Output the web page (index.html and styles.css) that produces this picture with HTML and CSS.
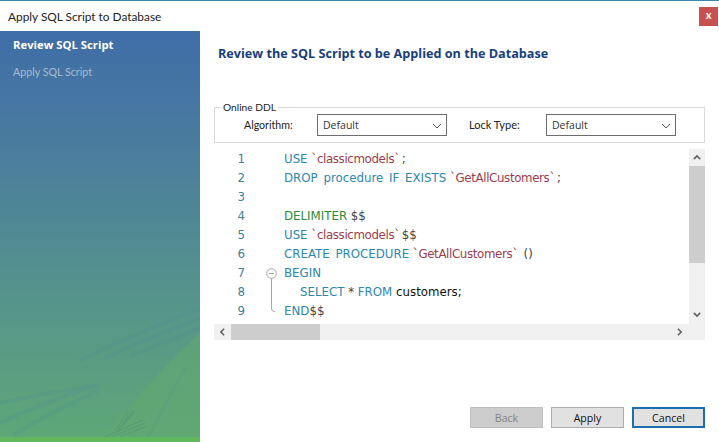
FILE: index.html
```html
<!DOCTYPE html>
<html lang="en">
<head>
<meta charset="utf-8">
<title>Apply SQL Script to Database</title>
<link rel="stylesheet" href="styles.css">
</head>
<body>
<div class="window">
  <header class="titlebar">
    <span class="title">Apply SQL Script to Database</span>
    <span class="close">x</span>
  </header>
  <div class="content">
    <aside class="sidebar">
      <svg class="art" viewBox="0 0 200 162" preserveAspectRatio="none" aria-hidden="true">
        <path d="M103 157 Q150 100 200 53 V157 Z" fill="#62a96f" opacity=".55"/>
        <g fill="none" stroke="#4f8f93" stroke-width="4" opacity=".25">
          <path d="M80 80 Q140 52 200 28"/>
          <path d="M105 78 Q155 55 200 38"/>
          <path d="M130 76 Q170 60 200 48"/>
          <path d="M0 123 Q50 112 100 105"/>
          <path d="M0 143 Q45 122 90 107"/>
          <path d="M13 155 Q55 130 100 110"/>
        </g>
        <path d="M148 157 L185 88" stroke="#5a9c80" stroke-width="3" fill="none" opacity=".4"/>
        <g stroke="#4f9478" stroke-width="1" fill="none" opacity=".6">
          <path d="M116 150 L128 130"/><path d="M119 150 L131 130"/><path d="M122 147 L134 130"/><path d="M125 143 L135 131"/>
          <path d="M105 157 L143 140"/><path d="M112 157 L145 143"/><path d="M120 157 L147 146"/>
        </g>
        <rect x="0" y="157" width="200" height="5" fill="#62b85f"/>
      </svg>
      <div class="step step-active">Review SQL Script</div>
      <div class="step">Apply SQL Script</div>
    </aside>
    <main class="main">
      <h1 class="heading">Review the SQL Script to be Applied on the Database</h1>
      <fieldset class="ddl">
        <legend class="ddl-legend">Online DDL</legend>
        <span class="label label-algo">Algorithm:</span>
        <div class="select select-algo">
          <span>Default</span>
          <svg class="chevron" viewBox="0 0 10 6" aria-hidden="true"><path d="M1 1 L5 5 L9 1"/></svg>
        </div>
        <span class="label label-lock">Lock Type:</span>
        <div class="select">
          <span>Default</span>
          <svg class="chevron" viewBox="0 0 10 6" aria-hidden="true"><path d="M1 1 L5 5 L9 1"/></svg>
        </div>
      </fieldset>
      <section class="editor">
        <div class="editor-top">
          <div class="code">
            <div class="row"><span class="num">1</span><span class="fold"></span><span class="src"><b class="kw">USE</b> <b class="str">`classicmodels`</b><b class="op">;</b></span></div>
            <div class="row"><span class="num">2</span><span class="fold"></span><span class="src"><b class="kw">DROP procedure IF EXISTS</b> <b class="str">`GetAllCustomers`</b><b class="op">;</b></span></div>
            <div class="row"><span class="num">3</span><span class="fold"></span><span class="src"></span></div>
            <div class="row"><span class="num">4</span><span class="fold"></span><span class="src"><b class="delim">DELIMITER</b> <b class="op">$$</b></span></div>
            <div class="row"><span class="num">5</span><span class="fold"></span><span class="src"><b class="kw">USE</b> <b class="str">`classicmodels`</b><b class="op">$$</b></span></div>
            <div class="row"><span class="num">6</span><span class="fold"></span><span class="src"><b class="kw">CREATE PROCEDURE</b> <b class="str">`GetAllCustomers`</b> <b class="op">()</b></span></div>
            <div class="row"><span class="num">7</span><span class="fold"><svg viewBox="0 0 12 19" aria-hidden="true"><circle cx="5.5" cy="9.5" r="4.8"/><path d="M3 9.5 H8 M5.5 14.5 V19"/></svg></span><span class="src"><b class="kw">BEGIN</b></span></div>
            <div class="row"><span class="num">8</span><span class="fold"><svg viewBox="0 0 12 19" aria-hidden="true"><path d="M5.5 0 V19"/></svg></span><span class="src src-indent"><b class="kw">SELECT</b> <b class="op">*</b> <b class="kw">FROM</b> <b class="id">customers;</b></span></div>
            <div class="row"><span class="num">9</span><span class="fold"><svg viewBox="0 0 12 19" aria-hidden="true"><path d="M5.5 0 V7 Q5.5 9.5 9 9.5"/></svg></span><span class="src"><b class="kw">END</b><b class="op">$$</b></span></div>
          </div>
          <div class="vscroll">
            <svg class="arrow" viewBox="0 0 10 6" aria-hidden="true"><path d="M1 5 L5 1 L9 5"/></svg>
            <div class="vthumb"></div>
            <svg class="arrow arrow-down" viewBox="0 0 10 6" aria-hidden="true"><path d="M1 1 L5 5 L9 1"/></svg>
          </div>
        </div>
        <div class="hscroll">
          <svg class="arrow-h" viewBox="0 0 6 10" aria-hidden="true"><path d="M5 1 L1 5 L5 9"/></svg>
          <div class="hthumb"></div>
          <svg class="arrow-h arrow-right" viewBox="0 0 6 10" aria-hidden="true"><path d="M1 1 L5 5 L1 9"/></svg>
        </div>
      </section>
      <footer class="buttons">
        <button class="btn btn-disabled" type="button" disabled>Back</button>
        <button class="btn" type="button">Apply</button>
        <button class="btn btn-default" type="button">Cancel</button>
      </footer>
    </main>
  </div>
</div>
</body>
</html>
```
FILE: styles.css
```css
* { box-sizing: border-box; }
html, body { margin: 0; height: 100%; }
body { background: #fff; font-family: "Lato", "Liberation Sans", sans-serif; font-size: 12px; color: #1a1a1a; overflow: hidden; }
.window { width: 719px; height: 442px; display: flex; flex-direction: column; border-top: 1px solid #3f87a6; }
.titlebar { height: 30px; flex: none; display: flex; align-items: center; justify-content: space-between; padding: 0 1px 0 8px; }
.title { font-size: 11.85px; color: #222; }
.close { width: 19px; height: 19px; background: #c75050; color: #fff; font-size: 11px; font-weight: 700; line-height: 16px; text-align: center; }
.content { flex: 1; display: flex; min-height: 0; }
.sidebar { width: 200px; flex: none; position: relative; background: linear-gradient(180deg, #3f6da8 0%, #4b7d9d 30%, #55928d 62%, #5da877 100%); padding: 6px 0 0 13px; }
.art { position: absolute; left: 0; bottom: 0; width: 200px; height: 162px; }
.step { position: relative; height: 27px; line-height: 15px; color: #a9bdd0; font-size: 10.7px; }
.step-active { color: #fff; font-weight: 700; font-family: "Open Sans", sans-serif; font-size: 11.3px; }
.main { flex: 1; min-width: 0; display: flex; flex-direction: column; padding: 0 14px 14px 14px; }
.heading { margin: 14px 0 0 4px; height: 17px; font-family: "Open Sans", sans-serif; font-size: 12.65px; line-height: 17px; font-weight: 700; color: #17407c; }
.ddl { margin: 39px 0 0; padding: 1px 28px 0 29px; height: 42px; border: 1px solid #d9d9d9; display: flex; align-items: flex-start; }
.ddl-legend { padding: 0 2px; margin-left: -23px; font-size: 10.2px; line-height: 12px; color: #222; }
.label { font-size: 11px; line-height: 22px; color: #222; }
.label-algo { width: 73px; font-size: 10.6px; }
.label-lock { width: 77px; margin-left: 22px; }
.select { width: 130px; height: 22px; border: 1px solid #6d6d6d; background: #fff; display: flex; align-items: center; justify-content: space-between; padding: 0 4px 0 5px; font-family: "Open Sans", sans-serif; font-size: 10.5px; color: #333; }
.chevron { width: 10px; height: 6px; margin-top: 1px; fill: none; stroke: #555; stroke-width: 1; }
.editor { margin-top: 6px; height: 191px; display: flex; flex-direction: column; background: #fff; }
.editor-top { flex: 1; display: flex; min-height: 0; }
.code { flex: 1; padding-top: 1px; font-family: "DejaVu Sans", sans-serif; font-size: 11.8px; }
.row { height: 19px; line-height: 19px; display: flex; }
.num { width: 31px; text-align: right; color: #3a8294; flex: none; }
.fold { width: 12px; height: 19px; margin-left: 21px; flex: none; }
.fold svg { display: block; width: 12px; height: 19px; fill: none; stroke: #a5a5a5; stroke-width: 1; }
.src { margin-left: 6px; white-space: nowrap; }
.src-indent { padding-left: 16px; }
.src b { font-weight: 400; }
.kw { color: #2d87ae; word-spacing: 2px; }
.str { color: #9a3c4b; letter-spacing: -.35px; margin-right: 2px; }
.op { color: #444; }
.id { color: #111; }
.delim { color: #2e8b35; }
.vscroll { width: 16px; flex: none; background: #f0f0f0; display: flex; flex-direction: column; align-items: center; }
.arrow { width: 8px; height: 5px; margin: 6px 0 6px; fill: none; stroke: #606060; stroke-width: 2; flex: none; }
.vthumb { width: 16px; height: 97px; background: #cdcdcd; flex: none; }
.arrow-down { margin-top: auto; margin-bottom: 7px; }
.hscroll { height: 16px; flex: none; background: #f0f0f0; display: flex; align-items: center; padding: 0 23px 0 6px; }
.arrow-h { width: 5px; height: 8px; flex: none; fill: none; stroke: #606060; stroke-width: 2; }
.hthumb { width: 89px; height: 16px; margin-left: 6px; background: #cdcdcd; }
.arrow-right { margin-left: auto; }
.buttons { margin-top: auto; display: flex; justify-content: flex-end; gap: 8px; }
.btn { width: 73px; height: 21px; padding: 0; border: 1px solid #adadad; background: #e1e1e1; font-family: "Open Sans", "Liberation Sans", sans-serif; font-size: 10.6px; color: #111; }
.btn-disabled { background: #cccccc; border-color: #bfbfbf; color: #838383; }
.btn-default { border: 2px solid #1b6fb0; }
```
